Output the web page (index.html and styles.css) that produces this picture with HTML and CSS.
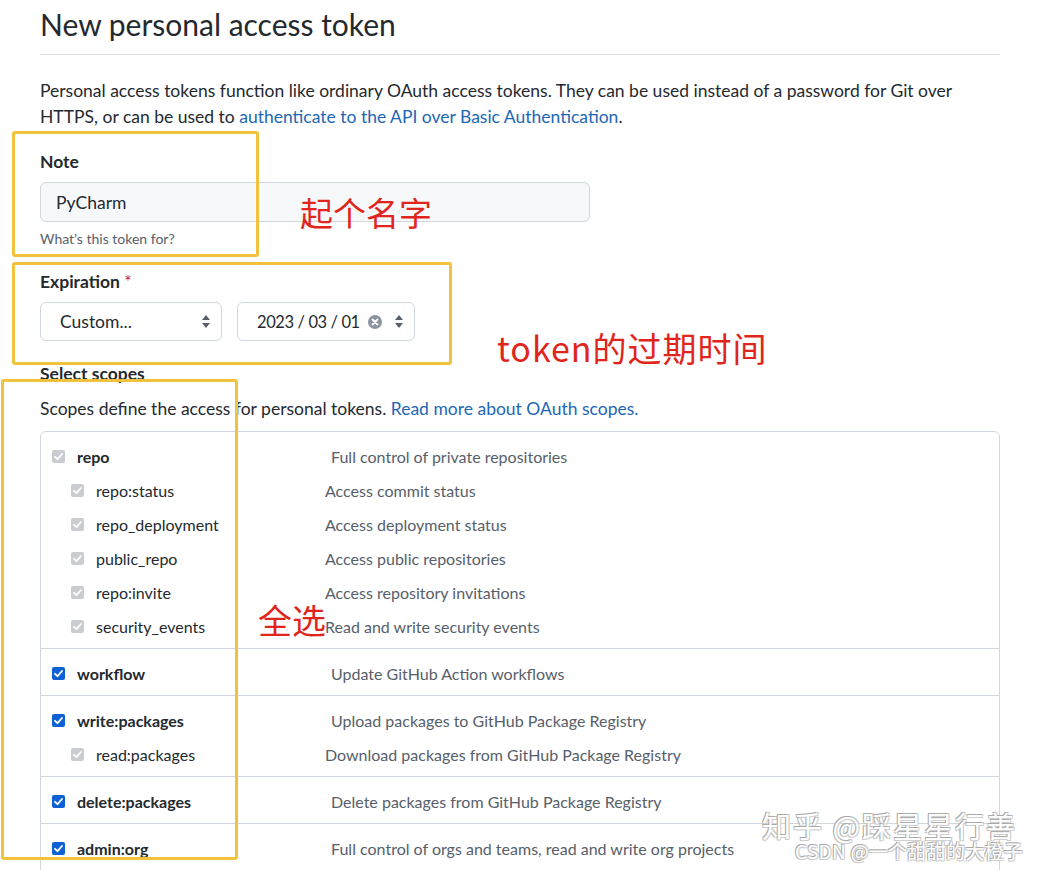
FILE: index.html
```html
<!DOCTYPE html>
<html lang="en">
<head>
<meta charset="utf-8">
<title>New personal access token</title>
<link rel="stylesheet" href="styles.css">
</head>
<body>
<div class="page">
  <h1 class="subhead">New personal access token</h1>
  <p class="intro">Personal access tokens function like ordinary OAuth access tokens. They can be used instead of a password for Git over HTTPS, or can be used to <a href="#">authenticate to the API over Basic Authentication</a>.</p>

  <div class="field note-field">
    <label class="field-label">Note</label>
    <div class="input">PyCharm</div>
    <p class="hint">What’s this token for?</p>
  </div>

  <div class="field exp-field">
    <label class="field-label">Expiration <span class="req">*</span></label>
    <div class="selects">
      <div class="select sel-custom">
        <span>Custom...</span>
        <svg class="updown" viewBox="0 0 8 13" width="8" height="13"><path d="M4 0L8 5H0Z M0 8H8L4 13Z" fill="#57606a"/></svg>
      </div>
      <div class="select sel-date">
        <span class="date">2023 / 03 / 01</span>
        <svg class="clear" viewBox="0 0 14 14" width="14" height="14"><circle cx="7" cy="7" r="7" fill="#8c959f"/><path d="M4.5 4.5L9.5 9.5M9.5 4.5L4.5 9.5" stroke="#fff" stroke-width="1.8" stroke-linecap="round"/></svg>
        <svg class="updown" viewBox="0 0 8 13" width="8" height="13"><path d="M4 0L8 5H0Z M0 8H8L4 13Z" fill="#57606a"/></svg>
      </div>
    </div>
  </div>

  <div class="field scopes-field">
    <label class="field-label">Select scopes</label>
    <p class="scopes-intro">Scopes define the access for personal tokens. <a href="#">Read more about OAuth scopes.</a></p>

    <div class="scopes">
      <div class="group">
        <div class="row top"><span class="cb dis"><svg viewBox="0 0 13 13"><path d="M3 6.8L5.5 9.2L10 4" /></svg></span><span class="name">repo</span><span class="desc">Full control of private repositories</span></div>
        <div class="row sub"><span class="cb dis"><svg viewBox="0 0 13 13"><path d="M3 6.8L5.5 9.2L10 4" /></svg></span><span class="name">repo:status</span><span class="desc">Access commit status</span></div>
        <div class="row sub"><span class="cb dis"><svg viewBox="0 0 13 13"><path d="M3 6.8L5.5 9.2L10 4" /></svg></span><span class="name">repo_deployment</span><span class="desc">Access deployment status</span></div>
        <div class="row sub"><span class="cb dis"><svg viewBox="0 0 13 13"><path d="M3 6.8L5.5 9.2L10 4" /></svg></span><span class="name">public_repo</span><span class="desc">Access public repositories</span></div>
        <div class="row sub"><span class="cb dis"><svg viewBox="0 0 13 13"><path d="M3 6.8L5.5 9.2L10 4" /></svg></span><span class="name">repo:invite</span><span class="desc">Access repository invitations</span></div>
        <div class="row sub"><span class="cb dis"><svg viewBox="0 0 13 13"><path d="M3 6.8L5.5 9.2L10 4" /></svg></span><span class="name">security_events</span><span class="desc">Read and write security events</span></div>
      </div>
      <div class="group">
        <div class="row top"><span class="cb on"><svg viewBox="0 0 13 13"><path d="M3 6.8L5.5 9.2L10 4" /></svg></span><span class="name">workflow</span><span class="desc">Update GitHub Action workflows</span></div>
      </div>
      <div class="group">
        <div class="row top"><span class="cb on"><svg viewBox="0 0 13 13"><path d="M3 6.8L5.5 9.2L10 4" /></svg></span><span class="name">write:packages</span><span class="desc">Upload packages to GitHub Package Registry</span></div>
        <div class="row sub"><span class="cb dis"><svg viewBox="0 0 13 13"><path d="M3 6.8L5.5 9.2L10 4" /></svg></span><span class="name">read:packages</span><span class="desc">Download packages from GitHub Package Registry</span></div>
      </div>
      <div class="group">
        <div class="row top"><span class="cb on"><svg viewBox="0 0 13 13"><path d="M3 6.8L5.5 9.2L10 4" /></svg></span><span class="name">delete:packages</span><span class="desc">Delete packages from GitHub Package Registry</span></div>
      </div>
      <div class="group">
        <div class="row top"><span class="cb on"><svg viewBox="0 0 13 13"><path d="M3 6.8L5.5 9.2L10 4" /></svg></span><span class="name">admin:org</span><span class="desc">Full control of orgs and teams, read and write org projects</span></div>
        <div class="row sub"><span class="cb dis"><svg viewBox="0 0 13 13"><path d="M3 6.8L5.5 9.2L10 4" /></svg></span><span class="name">write:org</span><span class="desc">Read and write org and team membership, read and write org projects</span></div>
      </div>
    </div>
  </div>
</div>

<div class="mark mark-note"></div>
<div class="mark mark-exp"></div>
<div class="mark mark-scopes"></div>
<div class="anno anno-name">起个名字</div>
<div class="anno anno-exp">token的过期时间</div>
<div class="anno anno-all">全选</div>
<div class="wm wm-zhihu">知乎 @踩星星行善</div>
<div class="wm wm-csdn">CSDN @一个甜甜的大橙子</div>
</body>
</html>
```
FILE: styles.css
```css
html { overflow: hidden; }
body {
  margin: 0;
  background: #fff;
  color: #24292f;
  font-family: Lato, "Noto Sans", sans-serif;
  font-size: 17.5px;
}
.page {
  width: 960px;
  padding-left: 40px;
}
.subhead {
  margin: 0;
  padding: 5px 0 11px;
  font-size: 30px;
  line-height: 38px;
  font-weight: 400;
  border-bottom: 1px solid #d8dee4;
}
.intro {
  margin: 23px 0 0;
  line-height: 26px;
}
a { color: #1d67b5; text-decoration: none; }
.field-label {
  display: block;
  font-weight: 700;
  line-height: 24px;
}
.note-field { margin-top: 20px; }
.input {
  margin-top: 8px;
  height: 38px;
  border: 1px solid #d0d7de;
  border-radius: 6px;
  background: #f6f8fa;
  padding: 0 0 0 15px;
  display: flex;
  align-items: center;
  width: 533px;
}
.hint {
  margin: 7px 0 0;
  font-size: 14px;
  line-height: 20px;
  color: #57606a;
}
.exp-field { margin-top: 21px; }
.req { color: #cf222e; font-weight: 400; }
.selects {
  margin-top: 8px;
  display: flex;
  gap: 15px;
}
.select {
  height: 37px;
  border: 1px solid #d0d7de;
  border-radius: 6px;
  display: flex;
  align-items: center;
  padding: 0 11px 0 19px;
  white-space: nowrap;
}
.sel-custom { width: 150px; justify-content: space-between; }
.sel-date { width: 146px; }
.date { flex: none; font-size: 16.5px; letter-spacing: -0.4px; }
.clear { margin-left: auto; margin-right: 13px; flex: none; }
.updown { flex: none; }
.scopes-field { margin-top: 21px; }
.scopes-intro {
  margin: 10px 0 0;
  line-height: 26px;
}
.scopes {
  margin-top: 9px;
  border: 1px solid #d0d7de;
  border-radius: 6px;
}
.group {
  padding: 7px 0 5px;
  border-top: 1px solid #d0d7de;
}
.group:first-child { border-top: 0; }
.row {
  display: flex;
  align-items: center;
  height: 34px;
  font-size: 16px;
}
.row.top { padding-left: 11px; }
.row.sub { padding-left: 30px; }
.cb {
  width: 13px;
  height: 13px;
  border-radius: 2px;
  flex: none;
  display: flex;
}
.cb svg { width: 13px; height: 13px; }
.cb path { fill: none; stroke: #fff; stroke-width: 1.8; stroke-linecap: round; stroke-linejoin: round; }
.cb.dis { background: #c9ccd1; }
.cb.on { background: #0e61d2; }
.name {
  margin-left: 12px;
  color: #24292f;
  flex: none;
}
.row.top .name { width: 254px; font-weight: 700; }
.row.sub .name { width: 229px; }
.desc { color: #57606a; white-space: nowrap; }

.mark {
  position: absolute;
  border: 3px solid #f3c23c;
  border-radius: 3px;
  box-sizing: border-box;
}
.mark-note { left: 12px; top: 131px; width: 247px; height: 126px; }
.mark-exp { left: 12px; top: 262px; width: 440px; height: 103px; }
.mark-scopes { left: 1px; top: 379px; width: 237px; height: 481px; }
.anno {
  position: absolute;
  color: #e0261c;
  font-family: "Noto Sans CJK SC", sans-serif;
  line-height: 1;
  white-space: nowrap;
}
.anno-name { left: 300px; top: 196px; font-size: 33px; }
.anno-exp { left: 497px; top: 331px; font-size: 34px; letter-spacing: 1px; }
.anno-all { left: 258px; top: 603px; font-size: 34px; }
.wm {
  position: absolute;
  font-family: "Noto Sans CJK SC", sans-serif;
  color: #fff;
  line-height: 1;
  white-space: nowrap;
  text-shadow: -1px -1px 0 #a9a9a9, 1px 1px 0 #d0d0d0, 1px -1px 0 #c4c4c4, -1px 1px 0 #c4c4c4;
}
.wm-zhihu { left: 762px; top: 811px; font-size: 29px; letter-spacing: 2px; }
.wm-csdn { left: 795px; top: 841px; font-size: 19px; letter-spacing: 0.3px; }
```
